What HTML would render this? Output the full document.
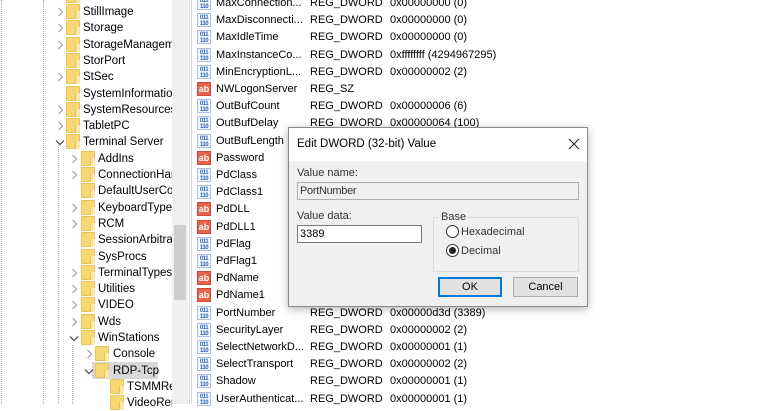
<!DOCTYPE html>
<html><head><meta charset="utf-8"><style>
*{margin:0;padding:0;box-sizing:border-box}
body{width:768px;height:404px;overflow:hidden;background:#fff;font-family:"Liberation Sans",sans-serif;font-size:11px;color:#000;position:relative}
.a{position:absolute;white-space:nowrap;line-height:16px}
.f{position:absolute;width:14px;height:15px;background:#f8d775;border:1px solid #e8c25a;border-radius:1px}
.f:after{content:"";position:absolute;right:-1px;bottom:-1px;width:4px;height:8px;background:#fbe7a6;border-left:1px solid #e3bf5f}
.i{position:absolute;width:14px;height:14px;font-size:6px;line-height:6px;text-align:center;font-weight:bold}
.d{color:#2a64b8;border:1px solid #a9c0e2;background:#f4f8fd;letter-spacing:-0.5px;padding-top:1px}
.s{color:#fff;background:#e8624c;border:1px solid #d04a35;font-size:9px;line-height:12px}
</style></head><body>
<div style="position:absolute;left:1px;top:0;height:404px;border-left:1px dotted #aaa"></div>
<div style="position:absolute;left:43px;top:0;height:404px;border-left:1px dotted #aaa"></div>
<div style="position:absolute;left:58px;top:145px;height:259px;border-left:1px dotted #aaa"></div>
<div style="position:absolute;left:72px;top:345px;height:59px;border-left:1px dotted #aaa"></div>
<div style="position:absolute;left:172px;top:0;width:16px;height:404px;background:#f0f0f0"></div>
<div style="position:absolute;left:174px;top:225px;width:12px;height:75px;background:#cdcdcd"></div>
<div style="position:absolute;left:189px;top:0;width:1px;height:404px;background:#d8d8d8"></div>
<div style="position:absolute;left:191px;top:0;width:1px;height:404px;background:#d8d8d8"></div>
<div style="position:absolute;left:92px;top:362px;width:66px;height:17px;background:#d9d9d9"></div>
<div id="tree"></div>
<div id="list"></div>
<div style="position:absolute;left:288px;top:127px;width:300px;height:180px;background:#f0f0f0;border:1px solid #8a8a8a;box-shadow:0 2px 8px rgba(0,0,0,.3)">
 <div style="position:absolute;left:0;top:0;width:298px;height:33px;background:#fff"></div>
 <div class="a" style="left:8px;top:8px;font-size:11.5px">Edit DWORD (32-bit) Value</div>
 <svg style="position:absolute;left:279px;top:10px" width="12" height="12"><path d="M1 1L11 11M11 1L1 11" stroke="#222" stroke-width="1.1"/></svg>
 <div class="a" style="left:8px;top:37px;color:#333">Value name:</div>
 <div style="position:absolute;left:8px;top:54px;width:282px;height:18px;border:1px solid #adadad;background:#f0f0f0"></div>
 <div class="a" style="left:11px;top:55px;letter-spacing:-0.3px;color:#333">PortNumber</div>
 <div class="a" style="left:8px;top:80px;color:#333">Value data:</div>
 <div style="position:absolute;left:8px;top:97px;width:125px;height:18px;border:1px solid #7a7a7a;background:#fff"></div>
 <div class="a" style="left:11px;top:98px">3389</div>
 <div style="position:absolute;left:144px;top:89px;width:146px;height:55px;border:1px solid #dcdcdc"></div>
 <div class="a" style="left:150px;top:81px;background:#f0f0f0;padding:0 2px;color:#333">Base</div>
 <div style="position:absolute;left:157px;top:97px;width:13px;height:13px;border:1px solid #333;border-radius:50%;background:#fff"></div>
 <div class="a" style="left:172px;top:96px;color:#333">Hexadecimal</div>
 <div style="position:absolute;left:157px;top:116px;width:13px;height:13px;border:1px solid #333;border-radius:50%;background:#fff"><div style="position:absolute;left:2px;top:2px;width:7px;height:7px;border-radius:50%;background:#222"></div></div>
 <div class="a" style="left:172px;top:115px;color:#333">Decimal</div>
 <div style="position:absolute;left:149px;top:149px;width:64px;height:20px;border:2px solid #0078d7;background:#e1e1e1;text-align:center;line-height:16px">OK</div>
 <div style="position:absolute;left:224px;top:149px;width:65px;height:20px;border:1px solid #adadad;background:#e1e1e1;text-align:center;line-height:18px">Cancel</div>
</div>
<script>
var t=[[-1,'A','',1],[0,'A','StillImage',1],[1,'A','Storage',1],[2,'A','StorageManageme',1],[3,'A','StorPort',0],[4,'A','StSec',1],[5,'A','SystemInformation',0],[6,'A','SystemResources',1],[7,'A','TabletPC',1],[8,'A','Terminal Server',2],
[9,'B','AddIns',1],[10,'B','ConnectionHan',1],[11,'B','DefaultUserCon',0],[12,'B','KeyboardType M',1],[13,'B','RCM',1],[14,'B','SessionArbitrati',0],[15,'B','SysProcs',0],[16,'B','TerminalTypes',1],[17,'B','Utilities',1],[18,'B','VIDEO',1],[19,'B','Wds',1],[20,'B','WinStations',2],
[21,'C','Console',1],[22,'C','RDP-Tcp',2],[23,'D','TSMMRen',0],[24,'D','VideoRem',0]];
var L={A:[57,66,83],B:[71,81,98],C:[86,95,113],D:[0,110,127]},h='';
t.forEach(function(r){var y=Math.round(12+16.3*r[0]),p=L[r[1]];
if(r[3]==1)h+='<svg style="position:absolute;left:'+p[0]+'px;top:'+(y-5)+'px" width="7" height="10"><path d="M1.5 1L5.5 5L1.5 9" fill="none" stroke="#a0a0a0" stroke-width="1.2"/></svg>';
if(r[3]==2)h+='<svg style="position:absolute;left:'+(p[0]-2)+'px;top:'+(y-3)+'px" width="10" height="7"><path d="M1 1.5L5 5.5L9 1.5" fill="none" stroke="#444" stroke-width="1.2"/></svg>';
h+='<div class="f" style="left:'+p[1]+'px;top:'+(y-8)+'px"></div>';
h+='<div class="a" style="left:'+p[2]+'px;top:'+(y-8)+'px;font-size:11.5px;max-width:'+(172-p[2])+'px;overflow:hidden">'+r[2]+'</div>';});
document.getElementById('tree').innerHTML=h;
var D='REG_DWORD',l=[['MaxConnection...',D,'0x00000000 (0)'],['MaxDisconnecti...',D,'0x00000000 (0)'],['MaxIdleTime',D,'0x00000000 (0)'],['MaxInstanceCo...',D,'0xffffffff (4294967295)'],['MinEncryptionL...',D,'0x00000002 (2)'],['NWLogonServer','REG_SZ',''],['OutBufCount',D,'0x00000006 (6)'],['OutBufDelay',D,'0x00000064 (100)'],['OutBufLength',D,''],['Password','REG_SZ',''],['PdClass',D,''],['PdClass1',D,''],['PdDLL','REG_SZ',''],['PdDLL1','REG_SZ',''],['PdFlag',D,''],['PdFlag1',D,''],['PdName','REG_SZ',''],['PdName1','REG_SZ',''],['PortNumber',D,'0x00000d3d (3389)'],['SecurityLayer',D,'0x00000002 (2)'],['SelectNetworkD...',D,'0x00000001 (1)'],['SelectTransport',D,'0x00000002 (2)'],['Shadow',D,'0x00000001 (1)'],['UserAuthenticat...',D,'0x00000001 (1)']];
h='';l.forEach(function(r,i){var y=Math.round(3+17.2*i);
h+=r[1]=='REG_SZ'?'<div class="i s" style="left:197px;top:'+(y-7)+'px">ab</div>':'<div class="i d" style="left:197px;top:'+(y-7)+'px">011<br>110</div>';
h+='<div class="a" style="left:216px;top:'+(y-8)+'px">'+r[0]+'</div><div class="a" style="left:310px;top:'+(y-8)+'px">'+r[1]+'</div><div class="a" style="left:390px;top:'+(y-8)+'px">'+r[2]+'</div>';});
document.getElementById('list').innerHTML=h;
</script>
</body></html>
